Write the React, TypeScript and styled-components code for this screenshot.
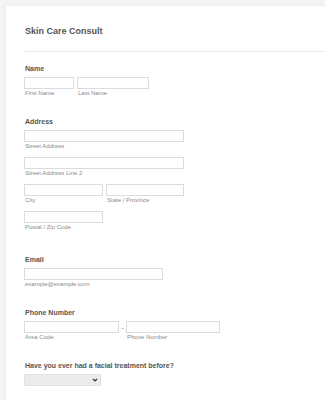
import React from "react";
import styled, { createGlobalStyle } from "styled-components";

const GlobalStyle = createGlobalStyle`
  html, body {
    margin: 0;
    padding: 0;
    background: #f3f3f3;
    overflow: hidden;
    font-family: "Liberation Sans", Arial, sans-serif;
  }
`;

const Card = styled.div`
  margin: 6px 0 0 6px;
  min-height: calc(100vh - 6px);
  background: #ffffff;
  box-shadow: 0 0 2px rgba(0, 0, 0, 0.08);
  padding: 20px 0 0 18px;
  box-sizing: border-box;
`;

const Title = styled.h1`
  margin: 0 0 0 1px;
  font-size: 9px;
  line-height: 11px;
  font-weight: bold;
  color: #555555;
`;

const Divider = styled.hr`
  margin: 14px 0 12px 1px;
  border: 0;
  border-top: 1px solid #e9e9e9;
  height: 0;
`;

const Field = styled.div<{ $after?: number }>`
  display: flex;
  flex-direction: column;
  margin-bottom: ${(p) => p.$after ?? 19}px;
`;

const Label = styled.div`
  font-size: 7px;
  line-height: 9px;
  font-weight: bold;
  color: #555555;
  margin: 0 0 4px 1px;
`;

const Rows = styled.div`
  display: flex;
  flex-direction: column;
  gap: 6px;
`;

const Row = styled.div`
  display: flex;
  align-items: flex-start;
  gap: 3px;
`;

const Part = styled.div`
  display: flex;
  flex-direction: column;
`;

const Input = styled.div<{ $w: number }>`
  width: ${(p) => p.$w}px;
  height: 12px;
  box-sizing: border-box;
  border: 1px solid #dcdcdc;
  background: #ffffff;
`;

const Sub = styled.span`
  font-size: 6px;
  line-height: 9px;
  color: #8a8a8a;
  margin-left: 1px;
`;

const Dash = styled.span`
  width: 1px;
  height: 12px;
  display: flex;
  align-items: center;
  justify-content: center;
  font-size: 7px;
  color: #888888;
`;

const Select = styled.div`
  width: 77px;
  height: 12px;
  box-sizing: border-box;
  border: 1px solid #e2e2e2;
  background: #ececec;
  display: flex;
  align-items: center;
  justify-content: flex-end;
  padding-right: 2px;
`;

export default function App() {
  return (
    <>
      <GlobalStyle />
      <Card>
        <Title>Skin Care Consult</Title>
        <Divider />

        <Field>
          <Label>Name</Label>
          <Row>
            <Part>
              <Input $w={50} />
              <Sub>First Name</Sub>
            </Part>
            <Part>
              <Input $w={72} />
              <Sub>Last Name</Sub>
            </Part>
          </Row>
        </Field>

        <Field $after={23}>
          <Label>Address</Label>
          <Rows>
            <Part>
              <Input $w={160} />
              <Sub>Street Address</Sub>
            </Part>
            <Part>
              <Input $w={160} />
              <Sub>Street Address Line 2</Sub>
            </Part>
            <Row>
              <Part>
                <Input $w={79} />
                <Sub>City</Sub>
              </Part>
              <Part>
                <Input $w={78} />
                <Sub>State / Province</Sub>
              </Part>
            </Row>
            <Part>
              <Input $w={79} />
              <Sub>Postal / Zip Code</Sub>
            </Part>
          </Rows>
        </Field>

        <Field>
          <Label>Email</Label>
          <Part>
            <Input $w={139} />
            <Sub>example@example.com</Sub>
          </Part>
        </Field>

        <Field>
          <Label>Phone Number</Label>
          <Row>
            <Part>
              <Input $w={95} />
              <Sub>Area Code</Sub>
            </Part>
            <Dash>-</Dash>
            <Part>
              <Input $w={94} />
              <Sub>Phone Number</Sub>
            </Part>
          </Row>
        </Field>

        <Field>
          <Label>Have you ever had a facial treatment before?</Label>
          <Select>
            <svg width="6" height="4" viewBox="0 0 6 4">
              <path d="M1 1 L3 3 L5 1" stroke="#333" strokeWidth="1.2" fill="none" />
            </svg>
          </Select>
        </Field>
      </Card>
    </>
  );
}
